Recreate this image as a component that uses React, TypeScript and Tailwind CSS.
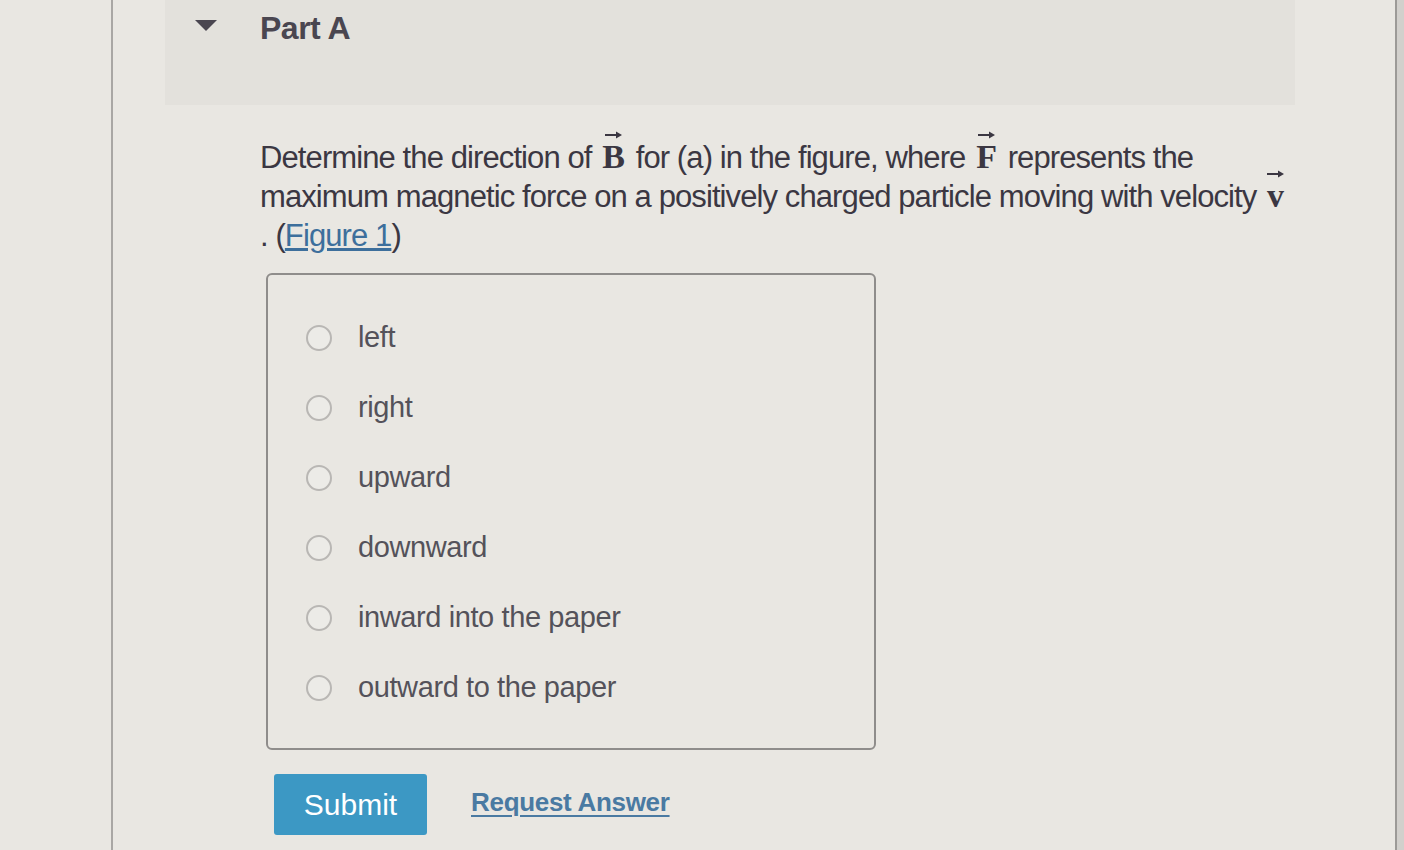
import React, { useState } from 'react';

const options = [
  'left',
  'right',
  'upward',
  'downward',
  'inward into the paper',
  'outward to the paper',
];

// bold serif letter with a small arrow on top
const Vec: React.FC<{ letter: string }> = ({ letter }) => (
  <span className="relative inline-block mx-[3px] font-['Liberation_Serif',serif] font-bold text-[34px] text-[#3b3742] leading-none tracking-normal">
    <svg
      className="absolute left-1/2 -translate-x-1/2 -top-[10px]"
      width="20"
      height="10"
      viewBox="0 0 20 10"
    >
      <path d="M1 5 H16" stroke="#3b3742" strokeWidth="2" />
      <path d="M12 1.5 L18 5 L12 8.5 Z" fill="#3b3742" />
    </svg>
    {letter}
  </span>
);

export default function App() {
  const [selected, setSelected] = useState<number | null>(null);

  return (
    <div className="w-[1404px] h-[850px] overflow-hidden bg-[#e9e7e2] font-['Liberation_Sans',Arial,sans-serif] flex">
      {/* left gutter */}
      <div className="w-[113px] shrink-0 border-r-2 border-[#a9a7a4]" />

      {/* main column */}
      <div className="flex-1 flex flex-col">
        <div className="ml-[52px] mr-[100px] h-[105px] bg-[#e3e1dc] flex items-start pt-[4px]">
          <div className="w-[95px] flex pl-[30px] pt-[16px]">
            <svg width="22" height="12" viewBox="0 0 22 12">
              <path d="M0 0 H22 L11 11 Z" fill="#4a4650" />
            </svg>
          </div>
          <h2 className="text-[32px] font-semibold text-[#4a4650] tracking-[-0.5px]">Part A</h2>
        </div>

        <div className="pl-[147px] pt-[33px]">
          <p className="text-[31px] leading-[39px] text-[#3b3742] whitespace-nowrap tracking-[-0.9px]">
            Determine the direction of <Vec letter="B" /> for (a) in the figure, where <Vec letter="F" /> represents the
            <br />
            maximum magnetic force on a positively charged particle moving with velocity <Vec letter="v" />
            <br />. (<span className="underline text-[#3d6f9c] decoration-[#3d6f9c]">Figure 1</span>)
          </p>

          <div className="mt-[18px] ml-[6px] w-[610px] h-[477px] border-2 border-[#8f8d8b] rounded-[6px] pt-[49px] pl-[38px]">
            <div className="flex flex-col gap-[42px]">
              {options.map((o, i) => (
                <label
                  key={o}
                  className="flex items-center gap-[26px] h-[28px] cursor-pointer"
                  onClick={() => setSelected(i)}
                >
                  <span
                    className={`w-[26px] h-[26px] rounded-full border-2 border-[#b9b7b4] bg-[#ecebe7] flex items-center justify-center ${
                      selected === i ? 'border-[#3d9ac4]' : ''
                    }`}
                  >
                    {selected === i && <span className="w-[12px] h-[12px] rounded-full bg-[#3d9ac4]" />}
                  </span>
                  <span className="text-[29px] text-[#54525a] tracking-[-0.4px]">{o}</span>
                </label>
              ))}
            </div>
          </div>

          <div className="mt-[24px] ml-[14px] flex items-center gap-[44px]">
            <button className="w-[153px] h-[61px] rounded-[3px] bg-[#3c98c4] text-white text-[30px] font-medium">
              Submit
            </button>
            <a className="text-[26px] font-bold text-[#4a7aa2] underline decoration-2 underline-offset-4 tracking-[-0.3px] -mt-[4px]">
              Request Answer
            </a>
          </div>
        </div>
      </div>

      {/* right edge */}
      <div className="w-[9px] shrink-0 border-l-2 border-[#9c9a97] bg-[#d2d0cc]" />
    </div>
  );
}
